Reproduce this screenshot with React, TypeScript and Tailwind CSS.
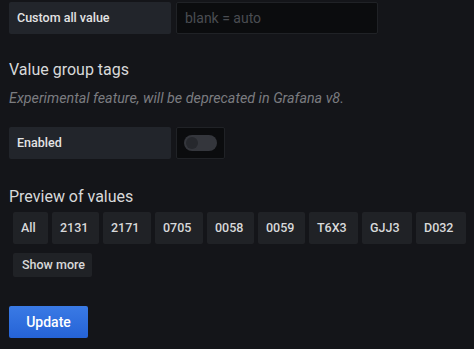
const tags = [
  { label: 'All', w: 'w-[35px]' },
  { label: '2131', w: 'w-[47px]' },
  { label: '2171', w: 'w-[48px]' },
  { label: '0705', w: 'w-[48px]' },
  { label: '0058', w: 'w-[47px]' },
  { label: '0059', w: 'w-[47px]' },
  { label: 'T6X3', w: 'w-[49px]' },
  { label: 'GJJ3', w: 'w-[50px]' },
  { label: 'D032', w: 'w-[50px]' },
];

export default function App() {
  return (
    <div className="h-[349px] w-[474px] overflow-hidden bg-[#141519] pl-[9px] pt-[2px] font-['Roboto',sans-serif] text-[#d8d9da]">
      <div className="flex h-8 gap-[5px]">
        <div className="flex w-[162px] items-center rounded-[2px] bg-[#22252b] pl-2 text-[12.5px] font-medium text-[#e3e3e4]">
          Custom all value
        </div>
        <input
          className="h-8 w-[202px] rounded-[2px] border border-[#202226] bg-[#0b0c0e] pl-2 text-[14px] text-[#ccccdc] outline-none placeholder:text-[#4a4c52]"
          placeholder="blank = auto"
        />
      </div>

      <h3 className="mt-[24px] text-[16px] leading-6 text-[#d8d9da]">Value group tags</h3>
      <p className="mt-[6px] text-[14.3px] leading-5 italic text-[#7b7c80]">
        Experimental feature, will be deprecated in Grafana v8.
      </p>

      <div className="mt-[19px] flex h-8 gap-[5px]">
        <div className="flex w-[162px] items-center rounded-[2px] bg-[#22252b] pl-2 text-[12.5px] font-medium text-[#e3e3e4]">
          Enabled
        </div>
        <div className="flex w-[49px] items-center rounded-[2px] border border-[#202226] bg-[#0b0c0e] pl-[7px]">
          <div className="flex h-4 w-[33px] items-center rounded-full bg-[#34363c] pl-[2px]">
            <div className="h-3 w-3 rounded-full bg-[#26282d]" />
          </div>
        </div>
      </div>

      <h3 className="mt-[26px] text-[16px] leading-6 text-[#d8d9da]">Preview of values</h3>
      <div className="mt-[3px] ml-[4px] flex gap-[4px]">
        {tags.map((t) => (
          <div
            key={t.label}
            className={`flex h-8 items-center rounded-[2px] bg-[#202226] pl-2 text-[12.5px] font-medium text-[#d8d9da] ${t.w}`}
          >
            {t.label}
          </div>
        ))}
      </div>
      <button className="mt-[9px] ml-[4px] flex h-6 w-[79px] items-center rounded-[2px] bg-[#202226] pl-[9px] text-[12.5px] font-medium text-[#d8d9da]">
        Show more
      </button>

      <button className="mt-[29px] flex h-8 w-[79px] items-center justify-center rounded-[2px] bg-gradient-to-b from-[#3a7ae5] to-[#2563d6] text-[14px] font-medium text-white">
        Update
      </button>
    </div>
  );
}
